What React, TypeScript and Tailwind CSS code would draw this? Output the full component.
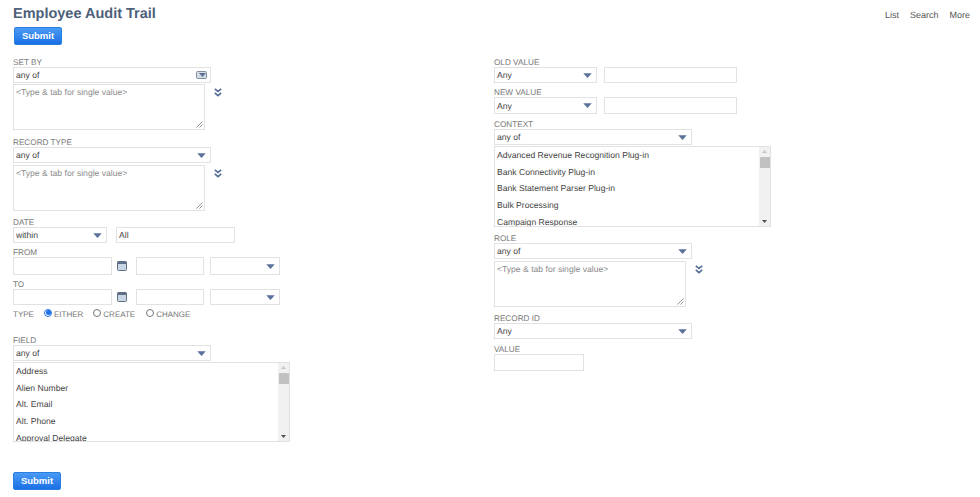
const font = "font-['Liberation_Sans',Arial,sans-serif] [text-rendering:geometricPrecision]";

function Label({ text, className = "" }: { text: string; className?: string }) {
  return (
    <div className={`flex h-[11px] items-center pt-[2px] text-[8.2px] uppercase leading-[9px] text-[#777777] ${className}`}>
      {text}
    </div>
  );
}

function Arrow() {
  return (
    <svg width="9" height="5" viewBox="0 0 9 5" className="shrink-0">
      <path d="M0.3 0.3 H8.7 L5 4.6 Q4.5 5 4 4.6 Z" fill="#5a7299" />
    </svg>
  );
}

function Select({ value, className = "", h = "h-[16px]" }: { value?: string; className?: string; h?: string }) {
  return (
    <div className={`flex ${h} items-center justify-between border border-[#e2e2e2] bg-white pl-[2px] pr-[4px] text-[8.6px] leading-[12px] text-[#444444] ${className}`}>
      <span>{value}</span>
      <Arrow />
    </div>
  );
}

function Input({ value, className = "" }: { value?: string; className?: string }) {
  return (
    <div className={`flex items-center border border-[#e2e2e2] bg-white pl-[2px] text-[8.6px] leading-[12px] text-[#444444] ${className}`}>
      {value}
    </div>
  );
}

function DoubleChevron() {
  return (
    <svg width="8" height="9" viewBox="0 0 8 9">
      <path d="M0.8 0.8 L4 3.4 L7.2 0.8 M0.8 4.8 L4 7.6 L7.2 4.8" fill="none" stroke="#566f99" strokeWidth="1.7" />
    </svg>
  );
}

function Calendar() {
  return (
    <svg width="10" height="10" viewBox="0 0 10 10">
      <rect x="0.5" y="0.5" width="9" height="9" rx="1" fill="#c9d6e2" stroke="#5f7086" />
      <rect x="0.5" y="0.5" width="9" height="2.5" fill="#5f7086" />
    </svg>
  );
}

function TypeAhead({ className = "mt-[2px]" }: { className?: string }) {
  return (
    <div className={`relative h-[46px] w-[192px] border border-[#e2e2e2] bg-white pl-[2px] pt-[1px] text-[8.6px] leading-[12px] text-[#8a8a8a] ${className}`}>
      <span>&lt;Type &amp; tab for single value&gt;</span>
      <svg width="7" height="7" viewBox="0 0 7 7" className="absolute bottom-[1px] right-[1px]">
        <path d="M0.5 6.5 L6.5 0.5 M3.5 6.5 L6.5 3.5" stroke="#777777" strokeWidth="0.8" />
      </svg>
      <div className="absolute left-[200px] top-[3px]">
        <DoubleChevron />
      </div>
    </div>
  );
}

function ListBox({ items, className = "" }: { items: string[]; className?: string }) {
  return (
    <div className={`mt-[1px] flex w-[277px] overflow-hidden border border-[#e2e2e2] bg-white text-[8.6px] leading-[12px] text-[#444444] ${className}`}>
      <div className="min-w-0 flex-1 pl-[2px]">
        {items.map((item) => (
          <div key={item} className="flex h-[16.6px] items-center whitespace-nowrap">
            {item}
          </div>
        ))}
      </div>
      <div className="flex w-[11px] flex-col items-center bg-[#f1f1f1]">
        <svg width="5" height="3" viewBox="0 0 5 3" className="mt-[3px]">
          <path d="M0 3 L2.5 0 L5 3 Z" fill="#c4c4c4" />
        </svg>
        <div className="mt-[4px] h-[11px] w-[10px] bg-[#c1c1c1]" />
        <svg width="5" height="3" viewBox="0 0 5 3" className="mb-[3px] mt-auto">
          <path d="M0 0 L2.5 3 L5 0 Z" fill="#505050" />
        </svg>
      </div>
    </div>
  );
}

function Submit({ className = "" }: { className?: string }) {
  return (
    <button className={`block h-[18px] w-[48px] rounded-[2px] border border-[#2a7fe0] bg-gradient-to-b from-[#4a9bf5] to-[#1a6fe4] text-[9.5px] font-bold leading-[14px] text-white ${className}`}>
      Submit
    </button>
  );
}

function Radio({ label, checked, className = "" }: { label: string; checked?: boolean; className?: string }) {
  return (
    <div className={`flex items-center gap-[2px] ${className}`}>
      <span className={`mb-[3px] flex h-[8px] w-[8px] items-center justify-center rounded-full border ${checked ? "border-[#1a6fe4]" : "border-[#777777]"}`}>
        {checked ? <span className="h-[5px] w-[5px] rounded-full bg-[#1a6fe4]" /> : null}
      </span>
      <span>{label}</span>
    </div>
  );
}

export default function App() {
  return (
    <div className={`relative h-[497px] w-[980px] overflow-hidden bg-white ${font}`}>
      <div className="flex h-[22px] items-start justify-between pl-[13px] pr-[10px] pt-[7px]">
        <h1 className="text-[14.5px] font-bold leading-[14px] text-[#4d5f79]">Employee Audit Trail</h1>
        <div className="flex gap-[11px] pt-[2px] text-[9px] leading-[12px] text-[#555555]">
          <span>List</span>
          <span>Search</span>
          <span>More</span>
        </div>
      </div>
      <Submit className="ml-[14px] mt-[5px]" />

      <div className="mt-[11px] flex">
        <div className="w-[481px] pl-[13px]">
          <Label text="Set By" />
          <div className="flex h-[16px] w-[198px] items-center justify-between border border-[#e2e2e2] bg-white pl-[2px] pr-[3px] text-[8.6px] leading-[12px] text-[#444444]">
            <span>any of</span>
            <svg width="11" height="8" viewBox="0 0 11 8">
              <rect x="0.5" y="0.5" width="10" height="7" rx="1" fill="#d5dbe2" stroke="#8090a3" />
              <path d="M3 2 H10 L6.5 6 Z" fill="#5a7299" />
            </svg>
          </div>
          <TypeAhead className="mt-[1px]" />

          <Label text="Record Type" className="mt-[6px]" />
          <Select value="any of" className="w-[198px]" />
          <TypeAhead />

          <Label text="Date" className="mt-[5px]" />
          <div className="flex">
            <Select value="within" className="w-[94px]" />
            <Input value="All" className="ml-[9px] h-[16px] w-[119px]" />
          </div>

          <Label text="From" className="mt-[3px]" />
          <div className="flex h-[18px] items-center">
            <Input className="h-[18px] w-[99px]" />
            <div className="ml-[5px] w-[10px]"><Calendar /></div>
            <Input className="ml-[9px] h-[18px] w-[68px]" />
            <Select className="ml-[6px] w-[70px]" h="h-[18px]" />
          </div>

          <Label text="To" className="mt-[3px]" />
          <div className="flex h-[16px] items-center">
            <Input className="h-[16px] w-[99px]" />
            <div className="ml-[5px] w-[10px]"><Calendar /></div>
            <Input className="ml-[9px] h-[16px] w-[68px]" />
            <Select className="ml-[6px] w-[70px]" />
          </div>

          <div className="mt-[3px] flex h-[12px] items-center text-[8px] uppercase leading-[11px] text-[#777777]">
            <span className="w-[31px]">Type</span>
            <Radio label="Either" checked />
            <Radio label="Create" className="ml-[10px]" />
            <Radio label="Change" className="ml-[11px]" />
          </div>

          <Label text="Field" className="mt-[14px]" />
          <Select value="any of" className="w-[198px]" />
          <ListBox
            className="h-[80px]"
            items={["Address", "Alien Number", "Alt. Email", "Alt. Phone", "Approval Delegate"]}
          />
          <Submit className="mt-[30px]" />
        </div>

        <div className="flex-1 pl-[13px]">
          <Label text="Old Value" />
          <div className="flex">
            <Select value="Any" className="w-[103px]" />
            <Input className="ml-[7px] h-[16px] w-[133px]" />
          </div>

          <Label text="New Value" className="mt-[3px]" />
          <div className="flex">
            <Select value="Any" className="w-[103px]" h="h-[17px]" />
            <Input className="ml-[7px] h-[17px] w-[133px]" />
          </div>

          <Label text="Context" className="mt-[4px]" />
          <Select value="any of" className="w-[198px]" />
          <ListBox
            className="h-[81px]"
            items={[
              "Advanced Revenue Recognition Plug-in",
              "Bank Connectivity Plug-in",
              "Bank Statement Parser Plug-in",
              "Bulk Processing",
              "Campaign Response",
            ]}
          />

          <Label text="Role" className="mt-[5px]" />
          <Select value="any of" className="w-[198px]" />
          <TypeAhead />

          <Label text="Record ID" className="mt-[5px]" />
          <Select value="Any" className="w-[198px]" />

          <Label text="Value" className="mt-[4px]" />
          <Input className="h-[17px] w-[90px]" />
        </div>
      </div>
    </div>
  );
}
